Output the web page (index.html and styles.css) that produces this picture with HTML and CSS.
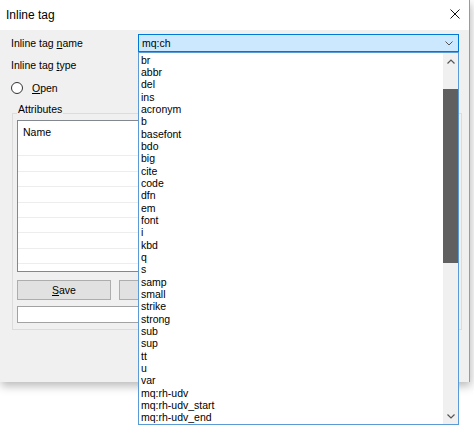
FILE: index.html
```html
<!DOCTYPE html>
<html>
<head>
<meta charset="utf-8">
<link rel="stylesheet" href="styles.css">
</head>
<body>
<div class="page">
  <div class="dialog">
    <div class="titlebar">
      <span class="title">Inline tag</span>
      <svg class="close" width="10" height="10" viewBox="0 0 10 10"><path d="M0.5 0.5 L9.5 9.5 M9.5 0.5 L0.5 9.5" stroke="#111" stroke-width="1" fill="none"/></svg>
    </div>
    <div class="content">
      <div class="row">
        <span class="lbl">Inline tag <u>n</u>ame</span>
        <div class="combo">
          <span class="combo-text">mq:ch</span>
          <svg class="combo-arrow" width="8" height="5" viewBox="0 0 8 5"><path d="M0.5 0.5 L4 4 L7.5 0.5" stroke="#555" stroke-width="1" fill="none"/></svg>
        </div>
      </div>
      <div class="row row2">
        <span class="lbl">Inline tag <u>t</u>ype</span>
      </div>
      <div class="row row3">
        <span class="radio"></span>
        <span class="radio-lbl"><u>O</u>pen</span>
      </div>
      <fieldset class="group">
        <legend class="group-title">Attributes</legend>
        <div class="listview">
          <div class="lv-head">Name</div>
          <div class="lv-rows"></div>
        </div>
        <div class="buttons">
          <div class="btn"><u>S</u>ave</div>
          <div class="btn"></div>
        </div>
        <div class="textbox"></div>
      </fieldset>
    </div>
  </div>

  <div class="dropdown">
    <div class="items">
      <div class="item">br</div>
      <div class="item">abbr</div>
      <div class="item">del</div>
      <div class="item">ins</div>
      <div class="item">acronym</div>
      <div class="item">b</div>
      <div class="item">basefont</div>
      <div class="item">bdo</div>
      <div class="item">big</div>
      <div class="item">cite</div>
      <div class="item">code</div>
      <div class="item">dfn</div>
      <div class="item">em</div>
      <div class="item">font</div>
      <div class="item">i</div>
      <div class="item">kbd</div>
      <div class="item">q</div>
      <div class="item">s</div>
      <div class="item">samp</div>
      <div class="item">small</div>
      <div class="item">strike</div>
      <div class="item">strong</div>
      <div class="item">sub</div>
      <div class="item">sup</div>
      <div class="item">tt</div>
      <div class="item">u</div>
      <div class="item">var</div>
      <div class="item">mq:rh-udv</div>
      <div class="item">mq:rh-udv_start</div>
      <div class="item">mq:rh-udv_end</div>
    </div>
    <div class="scrollbar">
      <div class="sb-btn">
        <svg width="8" height="5" viewBox="0 0 8 5"><path d="M0.5 4.5 L4 1 L7.5 4.5" stroke="#555" stroke-width="1.2" fill="none"/></svg>
      </div>
      <div class="sb-gap"></div>
      <div class="sb-thumb"></div>
      <div class="sb-track"></div>
      <div class="sb-btn sb-down">
        <svg width="8" height="5" viewBox="0 0 8 5"><path d="M0.5 0.5 L4 4 L7.5 0.5" stroke="#555" stroke-width="1.2" fill="none"/></svg>
      </div>
    </div>
  </div>
</div>
</body>
</html>
```

FILE: styles.css
```css
html, body {
  margin: 0;
  padding: 0;
  background: #ffffff;
}
body {
  font-family: "Liberation Sans", Arial, sans-serif;
  font-size: 10.5px;
  color: #000;
}
.page {
  position: relative;
  width: 474px;
  height: 430px;
  overflow: hidden;
}
.dialog {
  width: 470px;
  height: 382px;
  box-sizing: border-box;
  border-right: 1px solid #9a9a9a;
  box-shadow: 1px 4px 9px rgba(0, 0, 0, 0.28);
  background: #f0f0f0;
}
.titlebar {
  height: 30px;
  background: #ffffff;
  display: flex;
  align-items: center;
  justify-content: space-between;
  padding: 0 9px 1px 6px;
  box-sizing: border-box;
}
.title {
  font-size: 12px;
  line-height: 14px;
}
.close {
  display: block;
  margin-top: -1px;
}
.content {
  height: 352px;
  box-sizing: border-box;
  padding-left: 11px;
  padding-top: 4px;
}
.row {
  height: 18px;
  display: flex;
  align-items: center;
}
.row2 { margin-top: 4px; }
.row3 { margin-top: 5px; }
.lbl {
  width: 127px;
  line-height: 13px;
}
u {
  text-decoration: underline;
  text-underline-offset: 1px;
}
.combo {
  width: 321px;
  height: 18px;
  box-sizing: border-box;
  border: 1px solid #0078d7;
  background: #cce8ff;
  display: flex;
  align-items: center;
  justify-content: space-between;
  padding: 0 5px 0 3px;
}
.combo-text {
  line-height: 13px;
}
.combo-arrow {
  display: block;
}
.radio {
  width: 12px;
  height: 12px;
  box-sizing: border-box;
  border: 1px solid #333;
  border-radius: 50%;
  background: #fff;
}
.radio-lbl {
  margin-left: 9px;
  line-height: 13px;
}
.group {
  margin: 6px 0 0 1px;
  width: 450px;
  box-sizing: border-box;
  border: 1px solid #dcdcdc;
  padding: 0 4px 6px 4px;
  min-width: 0;
}
.group-title {
  padding: 0 1px 7px 1px;
  line-height: 13px;
}
.listview {
  margin-top: -3px;
  width: 438px;
  height: 152px;
  box-sizing: border-box;
  border: 1px solid #828790;
  background: #fff;
  display: flex;
  flex-direction: column;
}
.lv-head {
  height: 20px;
  box-sizing: border-box;
  padding: 5px 0 0 5px;
  line-height: 13px;
}
.lv-rows {
  flex: 1;
  background-image: repeating-linear-gradient(to bottom, transparent 0, transparent 14.4px, #ededed 14.4px, #ededed 15.4px);
}
.buttons {
  margin-top: 8px;
  display: flex;
  gap: 8px;
}
.btn {
  width: 94px;
  height: 20px;
  box-sizing: border-box;
  border: 1px solid #adadad;
  background: #e1e1e1;
  display: flex;
  align-items: center;
  justify-content: center;
  line-height: 13px;
}
.textbox {
  margin-top: 6px;
  width: 438px;
  height: 17px;
  box-sizing: border-box;
  border: 1px solid #a2a2a2;
  background: #fff;
}
.dropdown {
  position: absolute;
  left: 138px;
  top: 52px;
  width: 321px;
  height: 373px;
  box-sizing: border-box;
  border: 1px solid #5b9bd5;
  background: #fff;
  overflow: hidden;
}
.items {
  padding-top: 0.5px;
}
.item {
  height: 12.35px;
  line-height: 12.35px;
  padding-left: 2px;
  white-space: nowrap;
}
.scrollbar {
  position: absolute;
  top: 0;
  right: 0;
  bottom: 0;
  width: 15px;
  background: #f0f0f0;
  display: flex;
  flex-direction: column;
}
.sb-btn {
  height: 17px;
  display: flex;
  align-items: center;
  justify-content: center;
  flex: none;
}
.sb-btn svg { display: block; }
.sb-down {
  align-items: flex-end;
  padding-bottom: 5px;
  box-sizing: border-box;
}
.sb-gap {
  height: 19px;
  flex: none;
}
.sb-thumb {
  height: 174px;
  background: #606060;
  flex: none;
}
.sb-track {
  flex: 1;
}
```
